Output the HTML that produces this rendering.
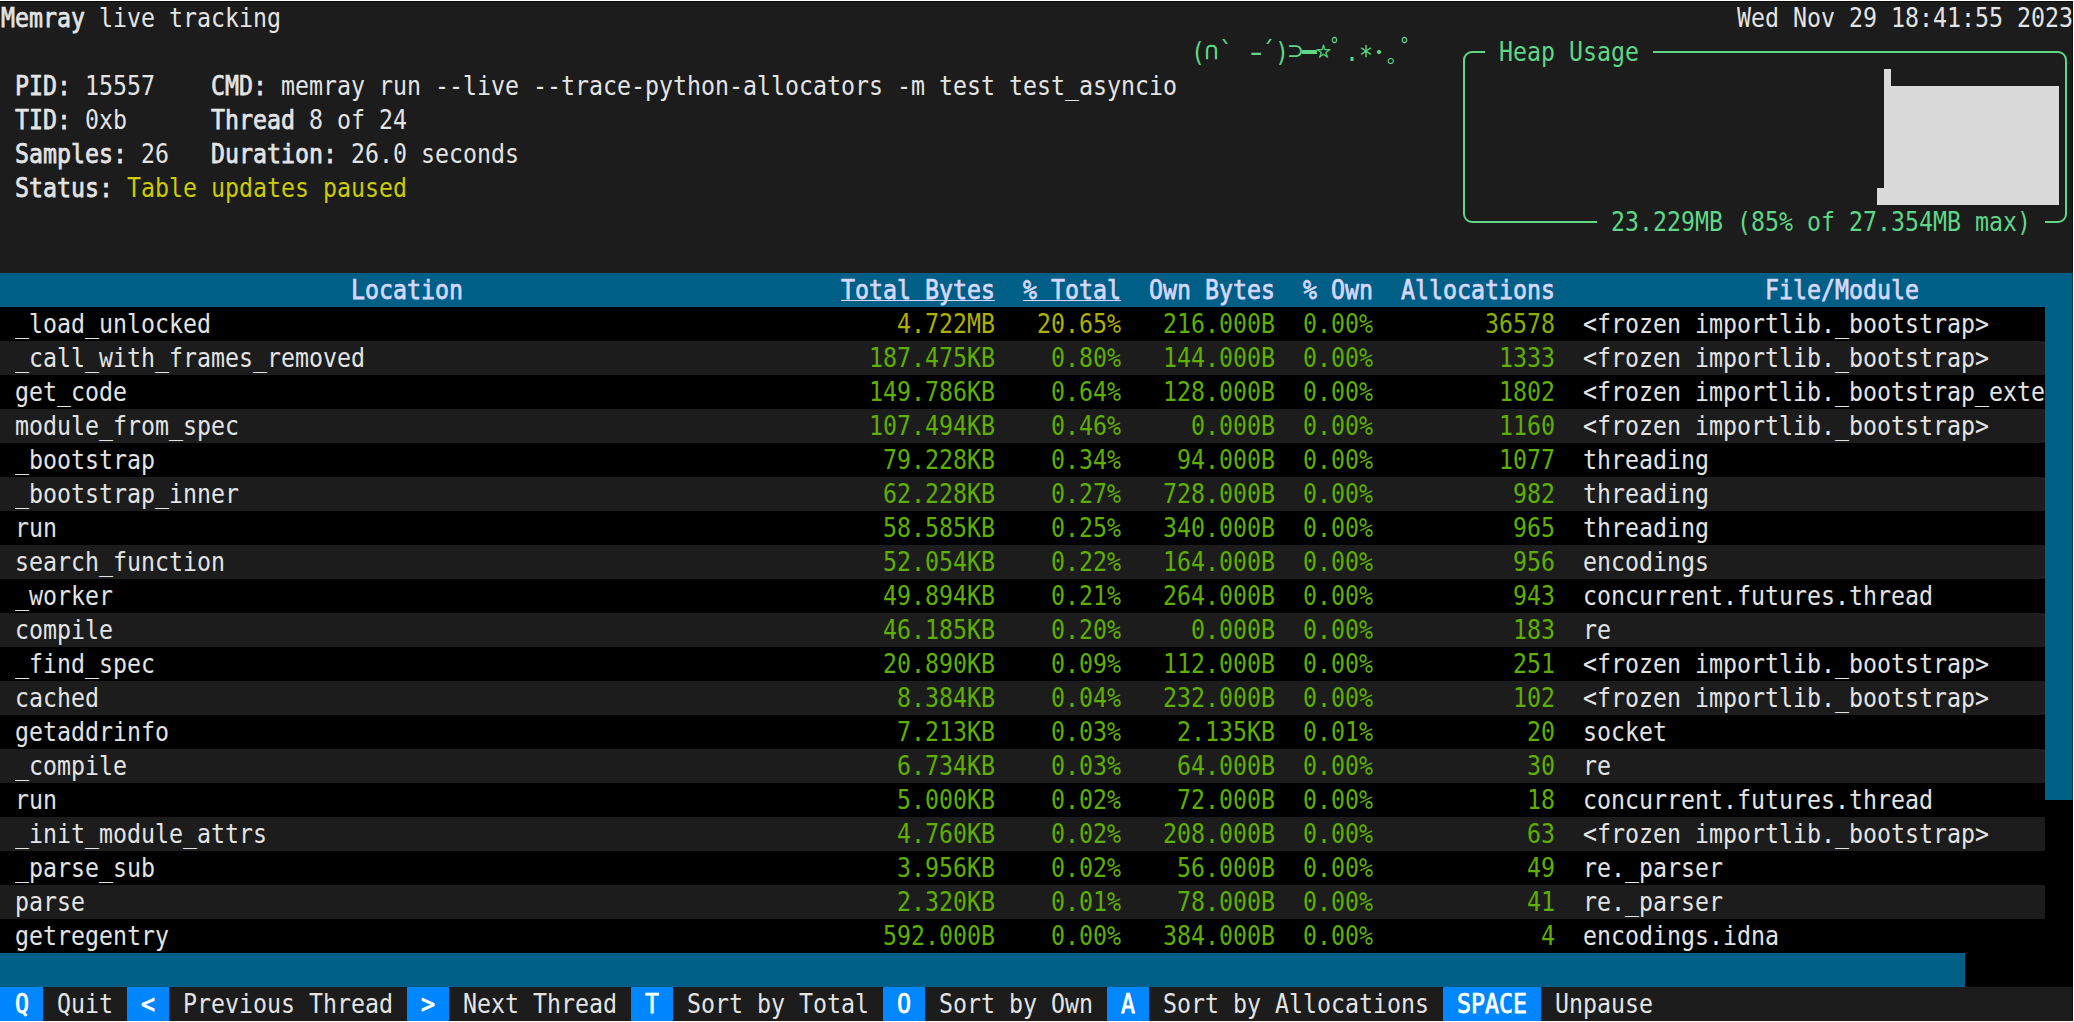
<!DOCTYPE html>
<html><head><meta charset="utf-8"><title>Memray live tracking</title>
<style>
html,body{margin:0;padding:0}
body{width:2074px;height:1022px;background:#1c1c1c;overflow:hidden;position:relative;
 font-family:"DejaVu Sans Mono","Liberation Mono","Noto Sans CJK JP",monospace;font-size:27.0px;color:#e4e4e4}
#edge-t{position:absolute;left:0;top:0;width:2074px;height:1px;background:#fff}
#edge-r{position:absolute;left:2073px;top:0;width:1px;height:1022px;background:#fff}
#edge-r2{position:absolute;left:2072px;top:1px;width:1px;height:1020px;background:rgba(0,0,0,.35)}
#edge-t2{position:absolute;left:0;top:1px;width:2073px;height:1px;background:#0a0a0a}
#edge-b{position:absolute;left:0;top:1021px;width:2074px;height:1px;background:#fffbee}
.b{position:absolute}
.t{position:absolute;white-space:pre;line-height:34px;height:34px;transform:scaleX(0.861254);transform-origin:0 0;margin-top:0px}
.bd{font-weight:normal;-webkit-text-stroke:0.75px}
.ul{text-decoration:underline;text-decoration-thickness:2px;text-underline-offset:3px}
.c{position:absolute;width:14px;height:34px;line-height:34px;text-align:center;white-space:pre;font-size:24px;margin-top:0px}
.hb{position:absolute;border:2px solid #5fd787;border-radius:9px}
</style></head>
<body>
<span class="t bd" style="left:0.5px;top:1px">Memray</span>
<span class="t" style="left:98.5px;top:1px">live tracking</span>
<span class="t" style="left:1736.5px;top:1px">Wed Nov 29 18:41:55 2023</span>
<span class="t" style="left:1191px;top:35px;color:#5fd787">(</span>
<span class="c" style="left:1204px;top:34px;color:#5fd787;font-size:25px">∩</span>
<span class="t" style="left:1219px;top:35px;color:#5fd787">`</span>
<span class="t" style="left:1247px;top:35px;color:#5fd787;transform:scaleX(1.3780);margin-left:-2.5px">-</span>
<span class="t" style="left:1261px;top:35px;color:#5fd787">´</span>
<span class="t" style="left:1275px;top:35px;color:#5fd787">)</span>
<span class="c" style="left:1288px;top:34px;color:#5fd787;font-size:25px">⊃</span>
<span class="c" style="left:1302px;top:35px;color:#5fd787;font-size:24px">━</span>
<span class="c" style="left:1316px;top:33px;color:#5fd787;font-size:25px;-webkit-text-stroke:0.5px">☆</span>
<span class="c" style="left:1331px;top:35px;color:#5fd787;font-size:28px">ﾟ</span>
<span class="t" style="left:1345px;top:35px;color:#5fd787">.</span>
<span class="t" style="left:1359px;top:39px;color:#5fd787">*</span>
<span class="c" style="left:1372px;top:36px;color:#5fd787;font-size:24px">･</span>
<span class="c" style="left:1385px;top:39px;color:#5fd787;font-size:20px">｡</span>
<span class="c" style="left:1401px;top:35px;color:#5fd787;font-size:28px">ﾟ</span>
<span class="t bd" style="left:14.5px;top:69px">PID:</span>
<span class="t" style="left:84.5px;top:69px">15557</span>
<span class="t bd" style="left:210.5px;top:69px">CMD:</span>
<span class="t" style="left:280.5px;top:69px">memray run --live --trace-python-allocators -m test test_asyncio</span>
<span class="t bd" style="left:14.5px;top:103px">TID:</span>
<span class="t" style="left:84.5px;top:103px">0xb</span>
<span class="t bd" style="left:210.5px;top:103px">Thread</span>
<span class="t" style="left:308.5px;top:103px">8 of 24</span>
<span class="t bd" style="left:14.5px;top:137px">Samples:</span>
<span class="t" style="left:140.5px;top:137px">26</span>
<span class="t bd" style="left:210.5px;top:137px">Duration:</span>
<span class="t" style="left:350.5px;top:137px">26.0 seconds</span>
<span class="t bd" style="left:14.5px;top:171px">Status:</span>
<span class="t" style="left:126.5px;top:171px;color:#cdcd00">Table updates paused</span>
<div class="hb" style="left:1463px;top:51px;width:600px;height:168px"></div>
<div class="b" style="left:1485px;top:49px;width:168px;height:6px;background:#1c1c1c"></div>
<div class="b" style="left:1597px;top:219px;width:448px;height:6px;background:#1c1c1c"></div>
<span class="t" style="left:1498.5px;top:35px;color:#5fd787">Heap Usage</span>
<span class="t" style="left:1610.5px;top:205px;color:#5fd787">23.229MB (85% of 27.354MB max)</span>
<div class="b" style="left:1877px;top:188px;width:7px;height:17px;background:#dadada"></div>
<div class="b" style="left:1884px;top:69px;width:7px;height:136px;background:#dadada"></div>
<div class="b" style="left:1891px;top:86px;width:168px;height:119px;background:#dadada"></div>
<div class="b" style="left:0px;top:273px;width:2073px;height:34px;background:#005f87"></div>
<span class="t bd" style="left:350.5px;top:273px;color:#d7d7ff">Location</span>
<span class="t bd" style="left:840.5px;top:273px;color:#d7d7ff">Total Bytes</span>
<span class="t bd" style="left:1022.5px;top:273px;color:#d7d7ff">% Total</span>
<div class="b" style="left:841px;top:300px;width:154px;height:1px;background:#d7d7ff"></div>
<div class="b" style="left:1023px;top:300px;width:98px;height:1px;background:#d7d7ff"></div>
<span class="t bd" style="left:1148.5px;top:273px;color:#d7d7ff">Own Bytes</span>
<span class="t bd" style="left:1302.5px;top:273px;color:#d7d7ff">% Own</span>
<span class="t bd" style="left:1400.5px;top:273px;color:#d7d7ff">Allocations</span>
<span class="t bd" style="left:1764.5px;top:273px;color:#d7d7ff">File/Module</span>
<div class="b" style="left:0px;top:307px;width:2045px;height:34px;background:#000"></div>
<span class="t" style="left:14.5px;top:307px">_load_unlocked</span>
<span class="t" style="left:896.5px;top:307px;color:#afaf00">4.722MB</span>
<span class="t" style="left:1036.5px;top:307px;color:#afaf00">20.65%</span>
<span class="t" style="left:1162.5px;top:307px;color:#5faf00">216.000B</span>
<span class="t" style="left:1302.5px;top:307px;color:#5faf00">0.00%</span>
<span class="t" style="left:1484.5px;top:307px;color:#87af00">36578</span>
<span class="t" style="left:1582.5px;top:307px">&lt;frozen importlib._bootstrap&gt;</span>
<div class="b" style="left:0px;top:341px;width:2045px;height:34px;background:#1c1c1c"></div>
<span class="t" style="left:14.5px;top:341px">_call_with_frames_removed</span>
<span class="t" style="left:868.5px;top:341px;color:#5faf00">187.475KB</span>
<span class="t" style="left:1050.5px;top:341px;color:#5faf00">0.80%</span>
<span class="t" style="left:1162.5px;top:341px;color:#5faf00">144.000B</span>
<span class="t" style="left:1302.5px;top:341px;color:#5faf00">0.00%</span>
<span class="t" style="left:1498.5px;top:341px;color:#5faf00">1333</span>
<span class="t" style="left:1582.5px;top:341px">&lt;frozen importlib._bootstrap&gt;</span>
<div class="b" style="left:0px;top:375px;width:2045px;height:34px;background:#000"></div>
<span class="t" style="left:14.5px;top:375px">get_code</span>
<span class="t" style="left:868.5px;top:375px;color:#5faf00">149.786KB</span>
<span class="t" style="left:1050.5px;top:375px;color:#5faf00">0.64%</span>
<span class="t" style="left:1162.5px;top:375px;color:#5faf00">128.000B</span>
<span class="t" style="left:1302.5px;top:375px;color:#5faf00">0.00%</span>
<span class="t" style="left:1498.5px;top:375px;color:#5faf00">1802</span>
<span class="t" style="left:1582.5px;top:375px">&lt;frozen importlib._bootstrap_exte</span>
<div class="b" style="left:0px;top:409px;width:2045px;height:34px;background:#1c1c1c"></div>
<span class="t" style="left:14.5px;top:409px">module_from_spec</span>
<span class="t" style="left:868.5px;top:409px;color:#5faf00">107.494KB</span>
<span class="t" style="left:1050.5px;top:409px;color:#5faf00">0.46%</span>
<span class="t" style="left:1190.5px;top:409px;color:#5faf00">0.000B</span>
<span class="t" style="left:1302.5px;top:409px;color:#5faf00">0.00%</span>
<span class="t" style="left:1498.5px;top:409px;color:#5faf00">1160</span>
<span class="t" style="left:1582.5px;top:409px">&lt;frozen importlib._bootstrap&gt;</span>
<div class="b" style="left:0px;top:443px;width:2045px;height:34px;background:#000"></div>
<span class="t" style="left:14.5px;top:443px">_bootstrap</span>
<span class="t" style="left:882.5px;top:443px;color:#5faf00">79.228KB</span>
<span class="t" style="left:1050.5px;top:443px;color:#5faf00">0.34%</span>
<span class="t" style="left:1176.5px;top:443px;color:#5faf00">94.000B</span>
<span class="t" style="left:1302.5px;top:443px;color:#5faf00">0.00%</span>
<span class="t" style="left:1498.5px;top:443px;color:#5faf00">1077</span>
<span class="t" style="left:1582.5px;top:443px">threading</span>
<div class="b" style="left:0px;top:477px;width:2045px;height:34px;background:#1c1c1c"></div>
<span class="t" style="left:14.5px;top:477px">_bootstrap_inner</span>
<span class="t" style="left:882.5px;top:477px;color:#5faf00">62.228KB</span>
<span class="t" style="left:1050.5px;top:477px;color:#5faf00">0.27%</span>
<span class="t" style="left:1162.5px;top:477px;color:#5faf00">728.000B</span>
<span class="t" style="left:1302.5px;top:477px;color:#5faf00">0.00%</span>
<span class="t" style="left:1512.5px;top:477px;color:#5faf00">982</span>
<span class="t" style="left:1582.5px;top:477px">threading</span>
<div class="b" style="left:0px;top:511px;width:2045px;height:34px;background:#000"></div>
<span class="t" style="left:14.5px;top:511px">run</span>
<span class="t" style="left:882.5px;top:511px;color:#5faf00">58.585KB</span>
<span class="t" style="left:1050.5px;top:511px;color:#5faf00">0.25%</span>
<span class="t" style="left:1162.5px;top:511px;color:#5faf00">340.000B</span>
<span class="t" style="left:1302.5px;top:511px;color:#5faf00">0.00%</span>
<span class="t" style="left:1512.5px;top:511px;color:#5faf00">965</span>
<span class="t" style="left:1582.5px;top:511px">threading</span>
<div class="b" style="left:0px;top:545px;width:2045px;height:34px;background:#1c1c1c"></div>
<span class="t" style="left:14.5px;top:545px">search_function</span>
<span class="t" style="left:882.5px;top:545px;color:#5faf00">52.054KB</span>
<span class="t" style="left:1050.5px;top:545px;color:#5faf00">0.22%</span>
<span class="t" style="left:1162.5px;top:545px;color:#5faf00">164.000B</span>
<span class="t" style="left:1302.5px;top:545px;color:#5faf00">0.00%</span>
<span class="t" style="left:1512.5px;top:545px;color:#5faf00">956</span>
<span class="t" style="left:1582.5px;top:545px">encodings</span>
<div class="b" style="left:0px;top:579px;width:2045px;height:34px;background:#000"></div>
<span class="t" style="left:14.5px;top:579px">_worker</span>
<span class="t" style="left:882.5px;top:579px;color:#5faf00">49.894KB</span>
<span class="t" style="left:1050.5px;top:579px;color:#5faf00">0.21%</span>
<span class="t" style="left:1162.5px;top:579px;color:#5faf00">264.000B</span>
<span class="t" style="left:1302.5px;top:579px;color:#5faf00">0.00%</span>
<span class="t" style="left:1512.5px;top:579px;color:#5faf00">943</span>
<span class="t" style="left:1582.5px;top:579px">concurrent.futures.thread</span>
<div class="b" style="left:0px;top:613px;width:2045px;height:34px;background:#1c1c1c"></div>
<span class="t" style="left:14.5px;top:613px">compile</span>
<span class="t" style="left:882.5px;top:613px;color:#5faf00">46.185KB</span>
<span class="t" style="left:1050.5px;top:613px;color:#5faf00">0.20%</span>
<span class="t" style="left:1190.5px;top:613px;color:#5faf00">0.000B</span>
<span class="t" style="left:1302.5px;top:613px;color:#5faf00">0.00%</span>
<span class="t" style="left:1512.5px;top:613px;color:#5faf00">183</span>
<span class="t" style="left:1582.5px;top:613px">re</span>
<div class="b" style="left:0px;top:647px;width:2045px;height:34px;background:#000"></div>
<span class="t" style="left:14.5px;top:647px">_find_spec</span>
<span class="t" style="left:882.5px;top:647px;color:#5faf00">20.890KB</span>
<span class="t" style="left:1050.5px;top:647px;color:#5faf00">0.09%</span>
<span class="t" style="left:1162.5px;top:647px;color:#5faf00">112.000B</span>
<span class="t" style="left:1302.5px;top:647px;color:#5faf00">0.00%</span>
<span class="t" style="left:1512.5px;top:647px;color:#5faf00">251</span>
<span class="t" style="left:1582.5px;top:647px">&lt;frozen importlib._bootstrap&gt;</span>
<div class="b" style="left:0px;top:681px;width:2045px;height:34px;background:#1c1c1c"></div>
<span class="t" style="left:14.5px;top:681px">cached</span>
<span class="t" style="left:896.5px;top:681px;color:#5faf00">8.384KB</span>
<span class="t" style="left:1050.5px;top:681px;color:#5faf00">0.04%</span>
<span class="t" style="left:1162.5px;top:681px;color:#5faf00">232.000B</span>
<span class="t" style="left:1302.5px;top:681px;color:#5faf00">0.00%</span>
<span class="t" style="left:1512.5px;top:681px;color:#5faf00">102</span>
<span class="t" style="left:1582.5px;top:681px">&lt;frozen importlib._bootstrap&gt;</span>
<div class="b" style="left:0px;top:715px;width:2045px;height:34px;background:#000"></div>
<span class="t" style="left:14.5px;top:715px">getaddrinfo</span>
<span class="t" style="left:896.5px;top:715px;color:#5faf00">7.213KB</span>
<span class="t" style="left:1050.5px;top:715px;color:#5faf00">0.03%</span>
<span class="t" style="left:1176.5px;top:715px;color:#5faf00">2.135KB</span>
<span class="t" style="left:1302.5px;top:715px;color:#5faf00">0.01%</span>
<span class="t" style="left:1526.5px;top:715px;color:#5faf00">20</span>
<span class="t" style="left:1582.5px;top:715px">socket</span>
<div class="b" style="left:0px;top:749px;width:2045px;height:34px;background:#1c1c1c"></div>
<span class="t" style="left:14.5px;top:749px">_compile</span>
<span class="t" style="left:896.5px;top:749px;color:#5faf00">6.734KB</span>
<span class="t" style="left:1050.5px;top:749px;color:#5faf00">0.03%</span>
<span class="t" style="left:1176.5px;top:749px;color:#5faf00">64.000B</span>
<span class="t" style="left:1302.5px;top:749px;color:#5faf00">0.00%</span>
<span class="t" style="left:1526.5px;top:749px;color:#5faf00">30</span>
<span class="t" style="left:1582.5px;top:749px">re</span>
<div class="b" style="left:0px;top:783px;width:2045px;height:34px;background:#000"></div>
<span class="t" style="left:14.5px;top:783px">run</span>
<span class="t" style="left:896.5px;top:783px;color:#5faf00">5.000KB</span>
<span class="t" style="left:1050.5px;top:783px;color:#5faf00">0.02%</span>
<span class="t" style="left:1176.5px;top:783px;color:#5faf00">72.000B</span>
<span class="t" style="left:1302.5px;top:783px;color:#5faf00">0.00%</span>
<span class="t" style="left:1526.5px;top:783px;color:#5faf00">18</span>
<span class="t" style="left:1582.5px;top:783px">concurrent.futures.thread</span>
<div class="b" style="left:0px;top:817px;width:2045px;height:34px;background:#1c1c1c"></div>
<span class="t" style="left:14.5px;top:817px">_init_module_attrs</span>
<span class="t" style="left:896.5px;top:817px;color:#5faf00">4.760KB</span>
<span class="t" style="left:1050.5px;top:817px;color:#5faf00">0.02%</span>
<span class="t" style="left:1162.5px;top:817px;color:#5faf00">208.000B</span>
<span class="t" style="left:1302.5px;top:817px;color:#5faf00">0.00%</span>
<span class="t" style="left:1526.5px;top:817px;color:#5faf00">63</span>
<span class="t" style="left:1582.5px;top:817px">&lt;frozen importlib._bootstrap&gt;</span>
<div class="b" style="left:0px;top:851px;width:2045px;height:34px;background:#000"></div>
<span class="t" style="left:14.5px;top:851px">_parse_sub</span>
<span class="t" style="left:896.5px;top:851px;color:#5faf00">3.956KB</span>
<span class="t" style="left:1050.5px;top:851px;color:#5faf00">0.02%</span>
<span class="t" style="left:1176.5px;top:851px;color:#5faf00">56.000B</span>
<span class="t" style="left:1302.5px;top:851px;color:#5faf00">0.00%</span>
<span class="t" style="left:1526.5px;top:851px;color:#5faf00">49</span>
<span class="t" style="left:1582.5px;top:851px">re._parser</span>
<div class="b" style="left:0px;top:885px;width:2045px;height:34px;background:#1c1c1c"></div>
<span class="t" style="left:14.5px;top:885px">parse</span>
<span class="t" style="left:896.5px;top:885px;color:#5faf00">2.320KB</span>
<span class="t" style="left:1050.5px;top:885px;color:#5faf00">0.01%</span>
<span class="t" style="left:1176.5px;top:885px;color:#5faf00">78.000B</span>
<span class="t" style="left:1302.5px;top:885px;color:#5faf00">0.00%</span>
<span class="t" style="left:1526.5px;top:885px;color:#5faf00">41</span>
<span class="t" style="left:1582.5px;top:885px">re._parser</span>
<div class="b" style="left:0px;top:919px;width:2045px;height:34px;background:#000"></div>
<span class="t" style="left:14.5px;top:919px">getregentry</span>
<span class="t" style="left:882.5px;top:919px;color:#5faf00">592.000B</span>
<span class="t" style="left:1050.5px;top:919px;color:#5faf00">0.00%</span>
<span class="t" style="left:1162.5px;top:919px;color:#5faf00">384.000B</span>
<span class="t" style="left:1302.5px;top:919px;color:#5faf00">0.00%</span>
<span class="t" style="left:1540.5px;top:919px;color:#5faf00">4</span>
<span class="t" style="left:1582.5px;top:919px">encodings.idna</span>
<div class="b" style="left:2045px;top:307px;width:28px;height:493px;background:#005f87"></div>
<div class="b" style="left:2045px;top:800px;width:28px;height:187px;background:#000"></div>
<div class="b" style="left:0px;top:953px;width:2073px;height:34px;background:#000"></div>
<div class="b" style="left:0px;top:953px;width:1964.5px;height:34px;background:#005f87"></div>
<div class="b" style="left:0px;top:987px;width:43px;height:34px;background:#0087ff"></div>
<span class="t bd" style="left:14.5px;top:987px;color:#ffffff">Q</span>
<span class="t" style="left:56.5px;top:987px">Quit</span>
<div class="b" style="left:127px;top:987px;width:42px;height:34px;background:#0087ff"></div>
<span class="t bd" style="left:140.5px;top:987px;color:#ffffff">&lt;</span>
<span class="t" style="left:182.5px;top:987px">Previous Thread</span>
<div class="b" style="left:407px;top:987px;width:42px;height:34px;background:#0087ff"></div>
<span class="t bd" style="left:420.5px;top:987px;color:#ffffff">&gt;</span>
<span class="t" style="left:462.5px;top:987px">Next Thread</span>
<div class="b" style="left:631px;top:987px;width:42px;height:34px;background:#0087ff"></div>
<span class="t bd" style="left:644.5px;top:987px;color:#ffffff">T</span>
<span class="t" style="left:686.5px;top:987px">Sort by Total</span>
<div class="b" style="left:883px;top:987px;width:42px;height:34px;background:#0087ff"></div>
<span class="t bd" style="left:896.5px;top:987px;color:#ffffff">O</span>
<span class="t" style="left:938.5px;top:987px">Sort by Own</span>
<div class="b" style="left:1107px;top:987px;width:42px;height:34px;background:#0087ff"></div>
<span class="t bd" style="left:1120.5px;top:987px;color:#ffffff">A</span>
<span class="t" style="left:1162.5px;top:987px">Sort by Allocations</span>
<div class="b" style="left:1443px;top:987px;width:98px;height:34px;background:#0087ff"></div>
<span class="t bd" style="left:1456.5px;top:987px;color:#ffffff">SPACE</span>
<span class="t" style="left:1554.5px;top:987px">Unpause</span>
<div id="edge-t"></div><div id="edge-t2"></div><div id="edge-r2"></div><div id="edge-r"></div><div id="edge-b"></div>
</body></html>
